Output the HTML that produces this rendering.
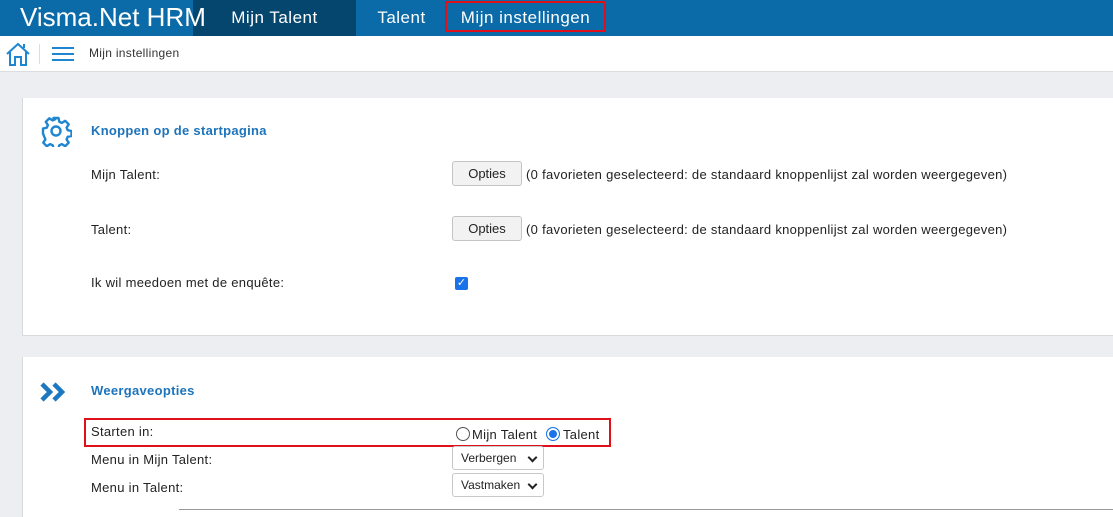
<!DOCTYPE html>
<html><head><meta charset="utf-8"><style>
*{margin:0;padding:0;box-sizing:border-box}
body{width:1113px;height:512px;overflow:hidden;background:#edeef1;font-family:"Liberation Sans",Tahoma,sans-serif;position:relative}
.top{position:absolute;left:0;top:0;width:1113px;height:36px;background:#0b6aa8}
.logo{position:absolute;left:20px;top:2px;color:#fff;font-size:26px;letter-spacing:0}
.tab{position:absolute;top:0;height:36px;color:#fff;font-size:17px;line-height:36px;text-align:center;letter-spacing:0.5px}
.bc{position:absolute;left:0;top:36px;width:1113px;height:36px;background:#fff;border-bottom:1px solid #dcdde0}
.card{position:absolute;left:22px;width:1091px;background:#fff;border-left:1px solid #d8d9dc;border-bottom:1px solid #d8d9dc}
.t{position:absolute;font-size:13px;color:#222;letter-spacing:0.3px}
.h{position:absolute;font-size:13px;font-weight:bold;color:#1d74bb;letter-spacing:0.3px}
.btn{position:absolute;width:70px;height:25px;border:1px solid #c4c4c4;border-radius:3px;background:#f2f2f2;font-size:13px;text-align:center;line-height:23px;color:#222}
.sel{position:absolute;width:92px;height:24px;border:1px solid #c8c8c8;border-radius:3px;background:#fff;font-size:12px;line-height:22px;padding-left:8px;color:#222}
.sel:after{content:"";position:absolute;right:7px;top:7px;width:5px;height:5px;border-right:2px solid #222;border-bottom:2px solid #222;transform:rotate(45deg)}
</style></head><body>
<div class="top">
<div class="tab" style="left:193px;width:163px;background:#05466f">Mijn Talent</div>
<div class="tab" style="left:358px;width:87px">Talent</div>
<div class="tab" style="left:445px;width:161px;border:2px solid #e0101a;height:31px;top:1px;line-height:29px">Mijn instellingen</div>
<div class="logo">Visma.Net HRM</div>
</div>
<div class="bc">
<svg style="position:absolute;left:5px;top:5px" width="26" height="26" viewBox="0 0 26 26" fill="none" stroke="#1e86d0" stroke-width="2"><path d="M2 13 L13 3 L24 13 M5 11 V24 H10 V16 H16 V24 H21 V11 M19 3 V7"/></svg>
<div style="position:absolute;left:39px;top:8px;width:1px;height:20px;background:#ddd"></div>
<div style="position:absolute;left:52px;top:11px;width:22px;height:2px;background:#1e86d0;box-shadow:0 6px 0 #1e86d0,0 12px 0 #1e86d0"></div>
<div class="t" style="left:89px;top:10px;font-size:12px;color:#333">Mijn instellingen</div>
</div>
<div class="card" style="top:98px;height:238px">
<svg style="position:absolute;left:17px;top:17px" width="32" height="32" viewBox="0 0 32 32" fill="none" stroke="#1e86d0" stroke-width="2.4" stroke-linejoin="round"><path d="M13.5 3h5l.8 3.8 2.6 1.1 3.3-2.1 3.5 3.5-2.1 3.3 1.1 2.6 3.8.8v5l-3.8.8-1.1 2.6 2.1 3.3-3.5 3.5-3.3-2.1-2.6 1.1-.8 3.8h-5l-.8-3.8-2.6-1.1-3.3 2.1-3.5-3.5 2.1-3.3-1.1-2.6L3 18.5v-5l3.8-.8 1.1-2.6-2.1-3.3 3.5-3.5 3.3 2.1 2.6-1.1z"/><circle cx="16" cy="16" r="4.5"/></svg>
<div class="h" style="left:68px;top:25px">Knoppen op de startpagina</div>
<div class="t" style="left:68px;top:69px">Mijn Talent:</div>
<div class="btn" style="left:429px;top:63px">Opties</div>
<div class="t" style="left:503px;top:69px">(0 favorieten geselecteerd: de standaard knoppenlijst zal worden weergegeven)</div>
<div class="t" style="left:68px;top:124px">Talent:</div>
<div class="btn" style="left:429px;top:118px">Opties</div>
<div class="t" style="left:503px;top:124px">(0 favorieten geselecteerd: de standaard knoppenlijst zal worden weergegeven)</div>
<div class="t" style="left:68px;top:177px">Ik wil meedoen met de enquête:</div>
<div style="position:absolute;left:432px;top:179px;width:13px;height:13px;background:#1a73e8;border-radius:2px;color:#fff;font-size:11px;line-height:13px;text-align:center">✓</div>
</div>
<div class="card" style="top:357px;height:160px;border-bottom:none">
<svg style="position:absolute;left:16px;top:24px" width="30" height="22" viewBox="0 0 30 22" fill="none" stroke="#1e78c0" stroke-width="4.5"><path d="M3 3l8 8-8 8M15 3l8 8-8 8"/></svg>
<div class="h" style="left:68px;top:26px">Weergaveopties</div>
<div style="position:absolute;left:61px;top:61px;width:527px;height:29px;border:2px solid #e0101a"></div>
<div class="t" style="left:68px;top:67px">Starten in:</div>
<div style="position:absolute;left:433px;top:70px;width:14px;height:14px;border:1px solid #555;border-radius:50%"></div>
<div class="t" style="left:449px;top:70px">Mijn Talent</div>
<div style="position:absolute;left:523px;top:70px;width:14px;height:14px;border:1px solid #1a73e8;border-radius:50%;background:#1a73e8;box-shadow:inset 0 0 0 2px #fff"></div>
<div class="t" style="left:540px;top:70px">Talent</div>
<div class="t" style="left:68px;top:95px">Menu in Mijn Talent:</div>
<div class="sel" style="left:429px;top:89px">Verbergen</div>
<div class="t" style="left:68px;top:123px">Menu in Talent:</div>
<div class="sel" style="left:429px;top:116px">Vastmaken</div>
<div style="position:absolute;left:156px;top:152px;width:935px;height:1px;background:#999"></div>
</div>
</body></html>
